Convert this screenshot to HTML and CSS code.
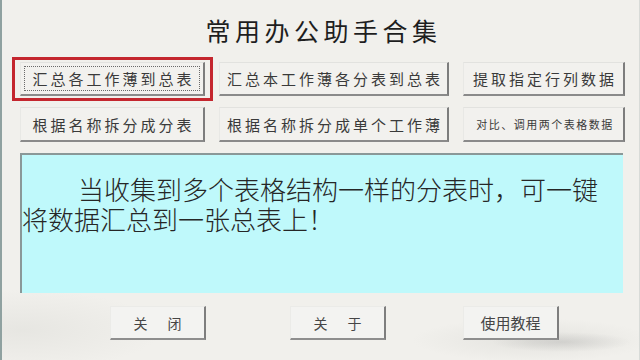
FILE: index.html
```html
<!DOCTYPE html>
<html lang="zh-CN">
<head>
<meta charset="utf-8">
<title>常用办公助手合集</title>
<link rel="stylesheet" href="styles.css">
</head>
<body>
<div class="app">
  <h1 class="title">常用办公助手合集</h1>
  <div class="actions">
    <button class="btn selected"><span>汇总各工作薄到总表</span></button>
    <button class="btn">汇总本工作薄各分表到总表</button>
    <button class="btn">提取指定行列数据</button>
    <button class="btn">根据名称拆分成分表</button>
    <button class="btn">根据名称拆分成单个工作薄</button>
    <button class="btn small">对比、调用两个表格数据</button>
  </div>
  <div class="desc">当收集到多个表格结构一样的分表时，可一键将数据汇总到一张总表上！</div>
  <div class="footer">
    <button class="fbtn spaced">关　闭</button>
    <button class="fbtn spaced">关　于</button>
    <button class="fbtn help">使用教程</button>
  </div>
</div>
</body>
</html>
```
FILE: styles.css
```css
html, body {
  margin: 0;
  padding: 0;
}
body {
  width: 640px;
  height: 360px;
  overflow: hidden;
  font-family: "Noto Sans CJK SC", "Noto Sans", sans-serif;
}
.app {
  box-sizing: border-box;
  width: 640px;
  height: 360px;
  border-left: 2px solid #8fa1a0;
  border-right: 1px solid #d8dbd8;
  background:
    radial-gradient(ellipse 70px 10px at 560px 342px, rgba(150,150,150,0.28), rgba(150,150,150,0) 100%),
    radial-gradient(ellipse 120px 22px at 530px 340px, rgba(190,190,185,0.25), rgba(190,190,185,0) 100%),
    radial-gradient(ellipse 140px 40px at 20px 330px, rgba(200,200,195,0.25), rgba(200,200,195,0) 100%),
    #f1f0ec;
  display: flex;
  flex-direction: column;
}
.title {
  margin: 0;
  padding-top: 12px;
  height: 36px;
  margin-bottom: 14px;
  font-size: 25px;
  line-height: 36px;
  font-weight: 400;
  letter-spacing: 4.5px;
  text-indent: 6px;
  text-align: center;
  color: #1e1e1e;
}
.actions {
  display: grid;
  grid-template-columns: 185px 230px 162px;
  grid-template-rows: 34px 35px;
  column-gap: 14px;
  row-gap: 11px;
  padding-left: 18px;
}
.btn {
  position: relative;
  box-sizing: border-box;
  margin: 0;
  padding: 0;
  background: #f2f1ee;
  border-top: 1px solid #e2e2df;
  border-left: 1px solid #e8e8e5;
  border-right: 2px solid #7d7d7d;
  border-bottom: 2px solid #8a8a8a;
  font-family: "Noto Sans CJK SC", sans-serif;
  font-size: 15px;
  letter-spacing: 3px;
  text-indent: 3px;
  color: #3a3a3a;
  text-align: center;
}
.btn.small {
  font-size: 11px;
  letter-spacing: 1.5px;
}
.btn.selected::after {
  content: "";
  position: absolute;
  top: -6px;
  bottom: -7px;
  left: -9px;
  right: -10px;
  border: 3px solid #c4262e;
  pointer-events: none;
}
.btn.selected::before {
  content: "";
  position: absolute;
  top: 3px;
  bottom: 3px;
  left: 3px;
  right: 3px;
  border: 1px dotted #6a6a6a;
  pointer-events: none;
}
.desc {
  box-sizing: border-box;
  margin-top: 11px;
  margin-left: 18px;
  width: 603px;
  height: 140px;
  padding: 19px 10px 0 0;
  background: #bff9fb;
  border-top: 2px solid #8a9898;
  border-left: 2px solid #8a9898;
  font-size: 26px;
  font-weight: 300;
  line-height: 30px;
  text-indent: 56px;
  color: #262626;
}
.footer {
  display: flex;
  margin-top: 13px;
  padding-left: 108px;
}
.fbtn {
  box-sizing: border-box;
  width: 96px;
  height: 34px;
  margin: 0 0 0 0;
  padding: 0;
  background: #f3f3f1;
  border-top: 1px solid #ebebe8;
  border-left: 1px solid #ebebe8;
  border-right: 2px solid #7e7e7e;
  border-bottom: 2px solid #8e8e8e;
  font-family: "Noto Sans CJK SC", sans-serif;
  font-size: 14px;
  color: #454545;
}
.fbtn.spaced {
  letter-spacing: 3px;
  text-indent: 3px;
}
.fbtn + .fbtn {
  margin-left: 84px;
}
.fbtn.help {
  margin-left: 77px;
  font-size: 15px;
}
```
